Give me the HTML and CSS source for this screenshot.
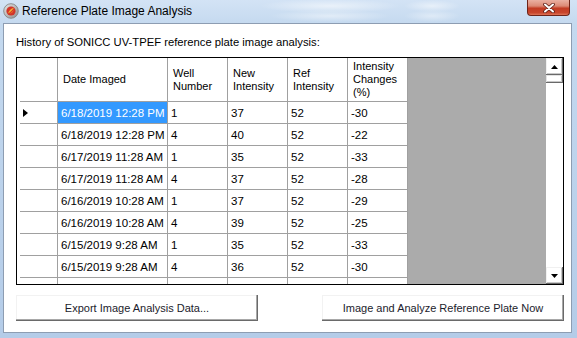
FILE: index.html
```html
<!DOCTYPE html>
<html>
<head>
<meta charset="UTF-8">
<title>Reference Plate Image Analysis</title>
<link rel="stylesheet" href="styles.css">
</head>
<body>
<div class="window">
	<div class="titlebar">
		<svg class="app-icon" width="16" height="16" viewBox="0 0 16 16">
			<defs>
				<linearGradient id="ring" x1="0" y1="0" x2="1" y2="1">
					<stop offset="0" stop-color="#e8e8e8"/>
					<stop offset="1" stop-color="#8d8d8d"/>
				</linearGradient>
			</defs>
			<circle cx="8" cy="8" r="7.3" fill="url(#ring)" stroke="#7c7c7c" stroke-width="0.8"/>
			<circle cx="8" cy="8" r="4.6" fill="#d2352b"/>
			<path d="M5 10.5 C6 7.5 8 5.5 11 4.8 C9.5 7 8 9 5 10.5Z" fill="#f6b531"/>
			<path d="M6.3 10.8 C8 10 9.6 8.5 10.8 6.5 C10.6 8.8 8.8 10.6 6.3 10.8Z" fill="#f07b25"/>
		</svg>
		<span class="title">Reference Plate Image Analysis</span>
		<div class="close">
			<svg width="12" height="10" viewBox="0 0 12 10">
				<path d="M2 1.5 L10 8.5 M10 1.5 L2 8.5" stroke="#5c1d14" stroke-width="3.6" stroke-linecap="round"/>
				<path d="M2 1.5 L10 8.5 M10 1.5 L2 8.5" stroke="#fff" stroke-width="2" stroke-linecap="round"/>
			</svg>
		</div>
	</div>
	<div class="frame">
		<div class="client">
			<div class="caption">History of SONICC UV-TPEF reference plate image analysis:</div>
			<div class="grid">
				<div class="cells">
					<!-- header -->
					<div class="c h rh"></div>
					<div class="c h">Date Imaged</div>
					<div class="c h">Well<br>Number</div>
					<div class="c h">New<br>Intensity</div>
					<div class="c h">Ref<br>Intensity</div>
					<div class="c h">Intensity<br>Changes<br>(%)</div>
					<!-- rows -->
					<div class="c rh"><span class="current"></span></div>
					<div class="c sel">6/18/2019 12:28 PM</div><div class="c">1</div><div class="c">37</div><div class="c">52</div><div class="c">-30</div>
					<div class="c rh"></div>
					<div class="c">6/18/2019 12:28 PM</div><div class="c">4</div><div class="c">40</div><div class="c">52</div><div class="c">-22</div>
					<div class="c rh"></div>
					<div class="c">6/17/2019 11:28 AM</div><div class="c">1</div><div class="c">35</div><div class="c">52</div><div class="c">-33</div>
					<div class="c rh"></div>
					<div class="c">6/17/2019 11:28 AM</div><div class="c">4</div><div class="c">37</div><div class="c">52</div><div class="c">-28</div>
					<div class="c rh"></div>
					<div class="c">6/16/2019 10:28 AM</div><div class="c">1</div><div class="c">37</div><div class="c">52</div><div class="c">-29</div>
					<div class="c rh"></div>
					<div class="c">6/16/2019 10:28 AM</div><div class="c">4</div><div class="c">39</div><div class="c">52</div><div class="c">-25</div>
					<div class="c rh"></div>
					<div class="c">6/15/2019 9:28 AM</div><div class="c">1</div><div class="c">35</div><div class="c">52</div><div class="c">-33</div>
					<div class="c rh"></div>
					<div class="c">6/15/2019 9:28 AM</div><div class="c">4</div><div class="c">36</div><div class="c">52</div><div class="c">-30</div>
					<!-- next row, scrolled below the edge -->
					<div class="c rh"></div>
					<div class="c"></div><div class="c"></div><div class="c"></div><div class="c"></div><div class="c"></div>
				</div>
				<div class="workspace"></div>
				<div class="vscroll">
					<div class="sbtn"><svg width="7" height="4" viewBox="0 0 7 4"><polygon points="0,4 3.5,0 7,4" fill="#000"/></svg></div>
					<div class="thumb"></div>
					<div class="track"></div>
					<div class="sbtn"><svg width="7" height="4" viewBox="0 0 7 4"><polygon points="0,0 7,0 3.5,4" fill="#000"/></svg></div>
				</div>
			</div>
			<div class="buttons">
				<button class="btn">Export Image Analysis Data...</button>
				<button class="btn">Image and Analyze Reference Plate Now</button>
			</div>
		</div>
	</div>
</div>
</body>
</html>
```

FILE: styles.css
```css
*{
	margin:0;
	padding:0;
	box-sizing:border-box;
}
body{
	width:577px;
	height:338px;
	overflow:hidden;
	font-family:"Liberation Sans", Arial, sans-serif;
	background:#bcd3ec;
}
.window{
	height:338px;
	display:flex;
	flex-direction:column;
	background:
		radial-gradient(ellipse 70px 7px at 330px 6px, rgba(255,255,255,.55), rgba(255,255,255,0)),
		radial-gradient(ellipse 60px 6px at 330px 16px, rgba(255,255,255,.45), rgba(255,255,255,0)),
		radial-gradient(ellipse 28px 6px at 432px 6px, rgba(255,255,255,.5), rgba(255,255,255,0)),
		radial-gradient(ellipse 28px 6px at 432px 16px, rgba(255,255,255,.4), rgba(255,255,255,0)),
		linear-gradient(#d3e3f5, #c4d9ef 25px, #b4cce8);
}

/* title bar */
.titlebar{
	height:23px;
	display:flex;
	align-items:flex-start;
}
.app-icon{
	margin:3px 0 0 3px;
}
.title{
	margin:4px 0 0 3px;
	font-size:12px;
	line-height:14px;
	color:#000;
}
.close{
	margin-left:auto;
	margin-right:7px;
	width:43px;
	height:16px;
	border:1px solid #6e2418;
	border-top:none;
	border-radius:0 0 4px 4px;
	background:linear-gradient(#eab0a2, #dc8a76 40%, #c23c24 55%, #c9462c 85%, #de7558);
	display:flex;
	align-items:center;
	justify-content:center;
}

/* client area */
.frame{
	flex:1;
	padding:0 5px 0 3px;
}
.client{
	height:310px;
	background:#fff;
	border:1px solid #8d9db2;
	padding:12px 7px 11px 12px;
}
.caption{
	font-size:11.25px;
	line-height:13px;
	color:#000;
}

/* data grid */
.grid{
	margin-top:8px;
	height:228px;
	border:1px solid #000;
	display:flex;
}
.cells{
	width:391px;
	display:grid;
	grid-template-columns:41px 110px 60px 60px 60px 60px;
	grid-template-rows:44px;
	grid-auto-rows:22px;
	align-content:start;
	overflow:hidden;
}
.c{
	border-right:1px solid #a0a0a0;
	border-bottom:1px solid #a0a0a0;
	padding-left:3px;
	display:flex;
	align-items:center;
	white-space:nowrap;
	overflow:hidden;
	font-size:11.5px;
	color:#000;
}
.h{
	font-size:11px;
	line-height:13px;
	padding-left:5px;
}
.rh{
	padding-left:6px;
	border-bottom:none;
	background:linear-gradient(#a0a0a0, #a0a0a0) right bottom / 37px 1px no-repeat;
}
.current{
	width:0;
	height:0;
	border-left:5px solid #000;
	border-top:4.5px solid transparent;
	border-bottom:4.5px solid transparent;
}
.sel{
	background:#3399ff;
	color:#fff;
}
.workspace{
	flex:1;
	background:#ababab;
}
.vscroll{
	width:17px;
	display:flex;
	flex-direction:column;
	background:#fff;
}
.sbtn{
	height:17px;
	display:flex;
	align-items:center;
	justify-content:center;
	box-shadow:inset -1px -1px #696969, inset 1px 1px #f0f0f0, inset -2px -2px #c8c8c8;
}
.thumb{
	height:8px;
	box-shadow:inset -1px -1px #696969, inset 1px 1px #e3e3e3, inset -2px -2px #c8c8c8;
}
.track{
	flex:1;
}

/* buttons */
.buttons{
	margin-top:10px;
	display:flex;
	justify-content:space-between;
}
.btn{
	width:242px;
	height:26px;
	border:none;
	background:#fff;
	box-shadow:inset -1px -1px #6a6a6a, inset -2px -2px #a8a8a8, inset 1px 1px #f2f2f2;
	font-family:"Liberation Sans", Arial, sans-serif;
	font-size:11px;
	color:#1c1c2c;
	padding-bottom:1px;
}
```
